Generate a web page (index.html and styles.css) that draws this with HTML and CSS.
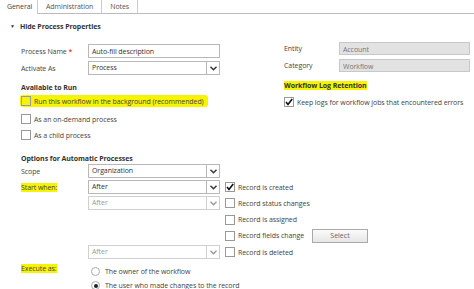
FILE: index.html
```html
<!DOCTYPE html>
<html lang="en">
<head>
  <meta charset="UTF-8">
  <title>Process Properties</title>
  <link rel="stylesheet" href="styles.css">
</head>
<body>
  <!-- Tabs -->
  <div class="tabs">
    <div class="tab active">General</div>
    <div class="tab first">Administration</div>
    <div class="tab">Notes</div>
    <div class="tab-fill"></div>
  </div>

  <div class="section-head"><span class="caret">&#9660;</span>Hide Process Properties</div>

  <div class="top">
    <div class="col-left">
      <div class="field first-field">
        <span class="label">Process Name <span class="req">*</span></span>
        <div class="input">Auto-fill description</div>
      </div>
      <div class="field">
        <span class="label">Activate As</span>
        <div class="select">
          <span class="value">Process</span>
          <span class="arrow"><svg width="7" height="5" viewBox="0 0 7 5"><path d="M0.5 0.8 L3.5 3.8 L6.5 0.8" fill="none" stroke="#333" stroke-width="1.4"/></svg></span>
        </div>
      </div>

      <div class="subhead avail">Available to Run</div>
      <label class="check mark">
        <span class="box"></span>Run this workflow in the background (recommended)
      </label>
      <label class="check"><span class="box"></span>As an on-demand process</label>
      <label class="check"><span class="box"></span>As a child process</label>
    </div>

    <div class="col-right">
      <div class="field">
        <span class="label wide">Entity</span>
        <div class="input readonly">Account</div>
      </div>
      <div class="field">
        <span class="label wide">Category</span>
        <div class="input readonly">Workflow</div>
      </div>
      <div class="subhead log"><span class="mark">Workflow Log Retention</span></div>
      <label class="check">
        <span class="box checked"><svg width="8" height="8" viewBox="0 0 8 8"><path d="M1 4 L3 6.5 L7.2 1" fill="none" stroke="#111" stroke-width="1.6"/></svg></span>Keep logs for workflow jobs that encountered errors
      </label>
    </div>
  </div>

  <div class="options">
    <div class="subhead">Options for Automatic Processes</div>

    <div class="opt-row">
      <span class="label">Scope</span>
      <div class="select">
        <span class="value">Organization</span>
        <span class="arrow"><svg width="7" height="5" viewBox="0 0 7 5"><path d="M0.5 0.8 L3.5 3.8 L6.5 0.8" fill="none" stroke="#333" stroke-width="1.4"/></svg></span>
      </div>
    </div>

    <div class="opt-row">
      <span class="label"><span class="mark">Start when:</span></span>
      <div class="select">
        <span class="value">After</span>
        <span class="arrow"><svg width="7" height="5" viewBox="0 0 7 5"><path d="M0.5 0.8 L3.5 3.8 L6.5 0.8" fill="none" stroke="#333" stroke-width="1.4"/></svg></span>
      </div>
      <label class="check inline">
        <span class="box checked"><svg width="8" height="8" viewBox="0 0 8 8"><path d="M1 4 L3 6.5 L7.2 1" fill="none" stroke="#111" stroke-width="1.6"/></svg></span>Record is created
      </label>
    </div>

    <div class="opt-row">
      <span class="label"></span>
      <div class="select disabled">
        <span class="value">After</span>
        <span class="arrow"><svg width="7" height="5" viewBox="0 0 7 5"><path d="M0.5 0.8 L3.5 3.8 L6.5 0.8" fill="none" stroke="#999" stroke-width="1.4"/></svg></span>
      </div>
      <label class="check inline"><span class="box"></span>Record status changes</label>
    </div>

    <div class="opt-row">
      <span class="label"></span>
      <div class="spacer"></div>
      <label class="check inline"><span class="box"></span>Record is assigned</label>
    </div>

    <div class="opt-row">
      <span class="label"></span>
      <div class="spacer"></div>
      <label class="check inline"><span class="box"></span>Record fields change</label>
      <button class="btn">Select</button>
    </div>

    <div class="opt-row">
      <span class="label"></span>
      <div class="select disabled">
        <span class="value">After</span>
        <span class="arrow"><svg width="7" height="5" viewBox="0 0 7 5"><path d="M0.5 0.8 L3.5 3.8 L6.5 0.8" fill="none" stroke="#999" stroke-width="1.4"/></svg></span>
      </div>
      <label class="check inline"><span class="box"></span>Record is deleted</label>
    </div>

    <div class="exec">
      <span class="label"><span class="mark">Execute as:</span></span>
      <div class="radios">
        <label class="radio"><span class="dot"></span>The owner of the workflow</label>
        <label class="radio"><span class="dot on"></span>The user who made changes to the record</label>
      </div>
    </div>
  </div>
</body>
</html>
```

FILE: styles.css
```css
body {
  margin: 0;
  font-family: "Open Sans", "Noto Sans", sans-serif;
  font-size: 7px;
  letter-spacing: -0.08px;
  color: #444;
  background: #fff;
  overflow: hidden;
}

/* Tabs */
.tabs {
  display: flex;
  height: 14px;
}

.tab {
  padding: 0 8px;
  line-height: 13px;
  color: #555;
  border-right: 1px solid #ccc;
  border-bottom: 1px solid #bbb;
}

.tab.active {
  width: 37px;
  padding: 0 0 0 7px;
  box-sizing: border-box;
  border: none;
  color: #444;
}

.tab.first {
  border-left: 1px solid #ccc;
}

.tab-fill {
  flex: 1;
  border-bottom: 1px solid #bbb;
}

.section-head {
  margin: 7px 0 0 10px;
  font-weight: bold;
  color: #333;
  line-height: 10px;
}

.caret {
  font-size: 5px;
  margin-right: 5px;
  vertical-align: 1px;
}

/* Top two columns */
.top {
  display: flex;
  margin-top: 9px;
}

.col-left {
  width: 263px;
  padding-left: 21px;
}

.col-right {
  flex: 1;
}

.field {
  display: flex;
  align-items: center;
  height: 14px;
  margin-bottom: 3px;
}

.first-field {
  margin-top: 3px;
}

.label {
  width: 67px;
  flex: none;
}

.label.wide {
  width: 55px;
}

.req {
  color: #d00;
}

.input {
  width: 131px;
  height: 13px;
  line-height: 13px;
  border: 1px solid #b8b8b8;
  padding-left: 3px;
  box-sizing: border-box;
  color: #333;
}

.col-left .input {
  width: 132px;
  height: 14px;
}

.input.readonly {
  background: #e2e2e2;
  border-color: #c8c8c8;
  color: #777;
}

.select {
  display: flex;
  width: 132px;
  height: 14px;
  border: 1px solid #b8b8b8;
  box-sizing: border-box;
  color: #333;
}

.select .value {
  flex: 1;
  padding-left: 3px;
  line-height: 12px;
}

.select .arrow {
  width: 12px;
  border-left: 1px solid #b8b8b8;
  display: flex;
  align-items: center;
  justify-content: center;
}

.select.disabled {
  border-color: #d0d0d0;
  color: #999;
}

.select.disabled .arrow {
  border-left-color: #d0d0d0;
}

.spacer {
  width: 132px;
}

.subhead {
  font-weight: bold;
  color: #333;
  line-height: 10px;
}

.avail {
  margin-top: 8px;
  margin-bottom: 2px;
}

.log {
  margin-top: 9px;
  margin-bottom: 3px;
}

.mark {
  background: #f6f400;
}

/* Checkboxes */
.check {
  display: flex;
  align-items: center;
  height: 16px;
  white-space: nowrap;
}

.check.mark {
  width: 187px;
  margin-left: -1px;
  padding-left: 1px;
  height: 12px;
  margin-bottom: 4px;
  border-radius: 3px;
}

.box {
  width: 8px;
  height: 8px;
  border: 1px solid #999;
  margin-right: 3px;
  flex: none;
  display: flex;
  align-items: center;
  justify-content: center;
  background: #fff;
}

.check.mark .box {
  background: transparent;
  border-color: #999;
}

.box.checked svg {
  display: block;
}

/* Automatic process options */
.options {
  padding-left: 21px;
  margin-top: 11px;
}

.options .subhead {
  margin-bottom: -1px;
}

.opt-row {
  display: flex;
  align-items: center;
  height: 16.2px;
}

.check.inline {
  margin-left: 5px;
  height: 14px;
}

.btn {
  margin-left: 8px;
  width: 56px;
  height: 14px;
  padding: 0;
  border: 1px solid #aaa;
  background: linear-gradient(#fbfbfb, #e6e6e6);
  font-family: inherit;
  font-size: 7px;
  color: #666;
}

.exec {
  display: flex;
  margin-top: 4px;
}

.radios {
  padding-left: 3px;
}

.radio {
  display: flex;
  align-items: center;
  height: 14.5px;
}

.dot {
  width: 7px;
  height: 7px;
  border: 1px solid #aaa;
  border-radius: 50%;
  margin-right: 5px;
  position: relative;
}

.dot.on::after {
  content: "";
  position: absolute;
  left: 1.5px;
  top: 1.5px;
  width: 4px;
  height: 4px;
  border-radius: 50%;
  background: #222;
}
```
